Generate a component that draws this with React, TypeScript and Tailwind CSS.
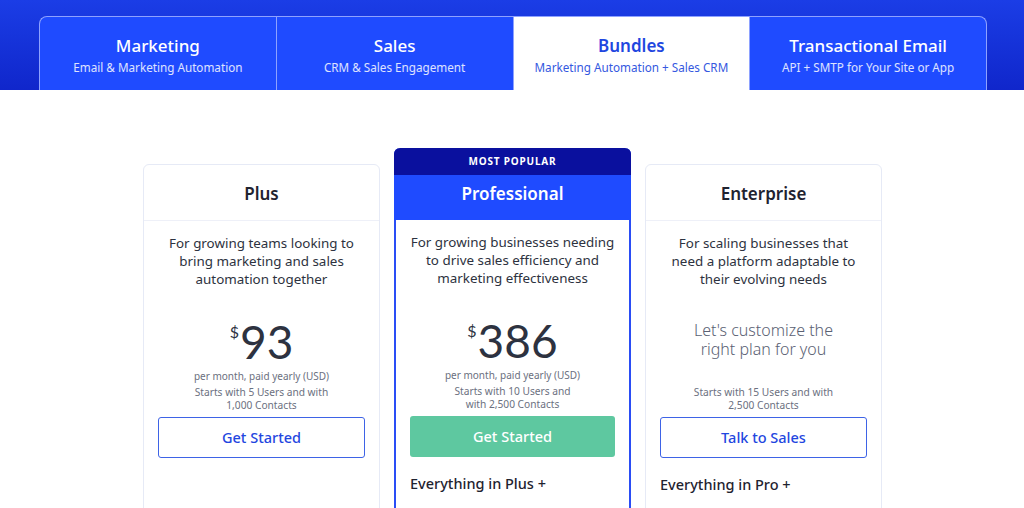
import React from "react";

const font = { fontFamily: '"Noto Sans", "Open Sans", sans-serif' };

function Tab({ title, sub, active, first, last }: { title: string; sub: string; active?: boolean; first?: boolean; last?: boolean }) {
  return (
    <div
      className={
        "flex-1 flex flex-col items-center pt-[18px] border-t border-l border-[#8ea2ff] " +
        (last ? "border-r rounded-tr-[8px] " : "") +
        (first ? "rounded-tl-[8px] " : "") +
        (active ? "bg-white" : "bg-[#1f4bff]")
      }
    >
      <div className={"text-[17px] leading-[22px] font-medium " + (active ? "text-[#1f47e0] font-semibold" : "text-white")}>{title}</div>
      <div className={"text-[11.7px] leading-[18px] mt-[1px] " + (active ? "text-[#3558e0]" : "text-white/85")}>{sub}</div>
    </div>
  );
}

function Card({
  name,
  desc,
  price,
  custom,
  starts,
  button,
  green,
  everything,
  popular,
}: {
  name: string;
  desc: string[];
  price?: string;
  custom?: string[];
  starts: string[];
  button: string;
  green?: boolean;
  everything?: string;
  popular?: boolean;
}) {
  return (
    <div
      className={
        "w-[237px] h-[400px] rounded-[6px] bg-white flex flex-col " +
        (popular ? "border-2 border-[#2a4df5] border-t-0" : "mt-[16px] border border-[#e6eaf6]")
      }
    >
      {popular ? (
        <>
          <div className="h-[27px] -mx-[2px] rounded-t-[6px] bg-[#0a109e] flex items-center justify-center text-white text-[10px] font-bold tracking-[0.08em]">
            MOST POPULAR
          </div>
          <div className="h-[45px] -mx-[2px] bg-[#1f4bff] flex items-center justify-center text-white text-[17px] font-semibold pb-[8px]">
            {name}
          </div>
        </>
      ) : (
        <div className="h-[56px] border-b border-[#eef0f8] flex items-center justify-center text-[#1f2330] text-[17px] font-semibold pt-[2px]">
          {name}
        </div>
      )}
      <div className="h-[90px] pt-[13px] text-center text-[13.4px] leading-[18px] text-[#2d3240]">
        {desc.map((d) => (
          <div key={d}>{d}</div>
        ))}
      </div>
      <div className="h-[74px] text-center">
        {price ? (
          <>
            <div className="pt-[6px] h-[58px] flex justify-center items-start">
              <span className="text-[16px] leading-[16px] mt-[7px] mr-[1px] text-[#2d3240]" style={{ fontFamily: "Lato, sans-serif" }}>
                $
              </span>
              <span className="text-[46px] leading-[50px] text-[#2d3240]" style={{ fontFamily: "Lato, sans-serif" }}>
                {price}
              </span>
            </div>
            <div className="text-[10px] leading-[14px] text-[#6b7080]">per month, paid yearly (USD)</div>
          </>
        ) : (
          <div className="pt-[10px] text-[16px] leading-[19px] text-[#5a6173] font-light">
            {custom!.map((c) => (
              <div key={c}>{c}</div>
            ))}
          </div>
        )}
      </div>
      <div className="h-[27px] pt-[1px] text-center text-[10.2px] leading-[13px] text-[#6b7080]">
        {starts.map((s) => (
          <div key={s}>{s}</div>
        ))}
      </div>
      <div
        className={
          "mx-[14px] mt-[5px] h-[41px] rounded-[3px] flex items-center justify-center text-[14.5px] font-medium " +
          (green ? "bg-[#5ec8a0] text-white" : "border border-[#3e63e6] text-[#1f47e0]")
        }
      >
        {button}
      </div>
      {everything && <div className="mx-[14px] mt-[16px] text-[14.5px] leading-[20px] font-medium text-[#1f2330]">{everything}</div>}
    </div>
  );
}

export default function App() {
  return (
    <div className="w-[1024px] h-[508px] overflow-hidden bg-white" style={font}>
      <div className="h-[90px] bg-linear-to-b from-[#1b3de6] to-[#1026cb] pt-[16px]">
        <div className="ml-[39px] w-[948px] h-[74px] flex">
          <Tab first title="Marketing" sub="Email & Marketing Automation" />
          <Tab title="Sales" sub="CRM & Sales Engagement" />
          <Tab active title="Bundles" sub="Marketing Automation + Sales CRM" />
          <Tab last title="Transactional Email" sub="API + SMTP for Your Site or App" />
        </div>
      </div>
      <div className="pt-[58px] flex justify-center items-start gap-[14px] pl-[1px]">
        <Card
          name="Plus"
          desc={["For growing teams looking to", "bring marketing and sales", "automation together"]}
          price="93"
          starts={["Starts with 5 Users and with", "1,000 Contacts"]}
          button="Get Started"
        />
        <Card
          popular
          name="Professional"
          desc={["For growing businesses needing", "to drive sales efficiency and", "marketing effectiveness"]}
          price="386"
          starts={["Starts with 10 Users and", "with 2,500 Contacts"]}
          button="Get Started"
          green
          everything="Everything in Plus +"
        />
        <Card
          name="Enterprise"
          desc={["For scaling businesses that", "need a platform adaptable to", "their evolving needs"]}
          custom={["Let's customize the", "right plan for you"]}
          starts={["Starts with 15 Users and with", "2,500 Contacts"]}
          button="Talk to Sales"
          everything="Everything in Pro +"
        />
      </div>
    </div>
  );
}
